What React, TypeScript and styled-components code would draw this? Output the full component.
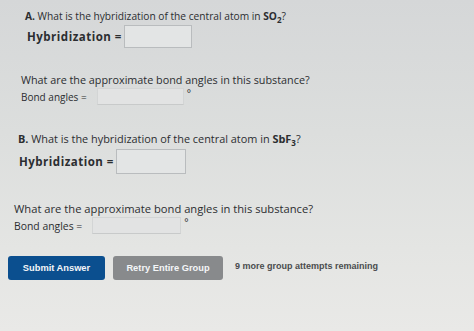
import React from "react";
import styled, { createGlobalStyle } from "styled-components";

const Global = createGlobalStyle`
  html, body { margin: 0; padding: 0; }
  body {
    width: 474px; height: 331px; overflow: hidden;
    background: linear-gradient(180deg, #d5d7d8 0%, #dcdedd 40%, #e4e5e3 75%, #e9e9e7 100%);
    font-family: "Open Sans", "Noto Sans", sans-serif;
    color: #2b2d30;
  }
`;

const Page = styled.div`
  display: flex;
  flex-direction: column;
  padding-top: 8px;
`;

const Question = styled.div<{ $indent: number; $mt: number; $size: number }>`
  padding-left: ${(p) => p.$indent}px;
  margin-top: ${(p) => p.$mt}px;
  font-size: ${(p) => p.$size}px;
  line-height: 16px;
  b { font-weight: 700; }
  sub { font-size: 8px; vertical-align: -3px; line-height: 0; }
`;

const Row = styled.div<{ $indent: number; $mt: number }>`
  display: flex;
  align-items: center;
  padding-left: ${(p) => p.$indent}px;
  margin-top: ${(p) => p.$mt}px;
`;

const BoldLabel = styled.span`
  font-weight: 700;
  font-size: 11.5px;
  letter-spacing: 0.5px;
  margin-right: 2px;
`;

const Label = styled.span<{ $size: number }>`
  font-size: ${(p) => p.$size}px;
  margin-right: 10px;
`;

const Box = styled.div<{ $w: number; $h: number }>`
  width: ${(p) => p.$w}px;
  height: ${(p) => p.$h}px;
  border: 1px solid #b9bcbe;
  background: #e3e5e5;
  box-sizing: border-box;
`;

const Field = styled.div<{ $w: number }>`
  width: ${(p) => p.$w}px;
  height: 17px;
  border: 1px solid #d3d5d5;
  border-bottom-color: #c8caca;
  background: #e2e3e3;
  box-sizing: border-box;
`;

const Degree = styled.span`
  font-size: 10px;
  line-height: 8px;
  margin-left: 3px;
  align-self: flex-start;
  margin-top: 1px;
`;

const Buttons = styled.div`
  display: flex;
  align-items: center;
  padding-left: 8px;
  margin-top: 22px;
  gap: 8px;
`;

const Button = styled.div<{ $bg: string; $w: number }>`
  width: ${(p) => p.$w}px;
  height: 24px;
  border-radius: 3px;
  background: ${(p) => p.$bg};
  color: #f4f6f8;
  font-family: "Liberation Sans", Arial, sans-serif;
  font-weight: 700;
  font-size: 9.3px;
  display: flex;
  align-items: center;
  justify-content: center;
`;

const Note = styled.span`
  margin-left: 4px;
  font-family: "Liberation Sans", Arial, sans-serif;
  font-weight: 700;
  font-size: 9px;
  color: #4a4c4e;
  margin-top: -4px;
`;

export default function App() {
  return (
    <>
      <Global />
      <Page>
        <Question $indent={25} $mt={0} $size={10.2}>
          <b>A.</b> What is the hybridization of the central atom in <b>SO<sub>2</sub></b>?
        </Question>
        <Row $indent={27} $mt={1}>
          <BoldLabel>Hybridization =</BoldLabel>
          <Box $w={68} $h={23} />
        </Row>
        <Question $indent={21} $mt={24} $size={10.8}>
          What are the approximate bond angles in this substance?
        </Question>
        <Row $indent={21} $mt={0}>
          <Label $size={10}>Bond angles =</Label>
          <Field $w={87} />
          <Degree>°</Degree>
        </Row>
        <Question $indent={18} $mt={26} $size={10.9}>
          <b>B.</b> What is the hybridization of the central atom in <b>SbF<sub>3</sub></b>?
        </Question>
        <Row $indent={19} $mt={2}>
          <BoldLabel>Hybridization =</BoldLabel>
          <Box $w={70} $h={25} />
        </Row>
        <Question $indent={14} $mt={27} $size={11.2}>
          What are the approximate bond angles in this substance?
        </Question>
        <Row $indent={14} $mt={0}>
          <Label $size={10.4}>Bond angles =</Label>
          <Field $w={89} />
          <Degree>°</Degree>
        </Row>
        <Buttons>
          <Button $bg="#0b4f8f" $w={97}>Submit Answer</Button>
          <Button $bg="#888a8c" $w={110}>Retry Entire Group</Button>
          <Note>9 more group attempts remaining</Note>
        </Buttons>
      </Page>
    </>
  );
}
